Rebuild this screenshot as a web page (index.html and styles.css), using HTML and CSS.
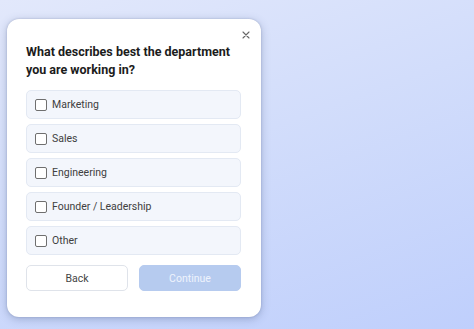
FILE: index.html
```html
<!DOCTYPE html>
<html>
<head>
<meta charset="utf-8">
<link rel="stylesheet" href="styles.css">
</head>
<body>
<div class="page">
  <div class="card">
    <button class="close" aria-label="Close">
      <svg width="8" height="8" viewBox="0 0 8 8"><path d="M1 1L7 7M7 1L1 7" stroke="#666" stroke-width="1.1" stroke-linecap="round"/></svg>
    </button>
    <h1 class="title">What describes best the department you are working in?</h1>
    <div class="options">
      <label class="option"><span class="box"></span><span class="label">Marketing</span></label>
      <label class="option"><span class="box"></span><span class="label">Sales</span></label>
      <label class="option"><span class="box"></span><span class="label">Engineering</span></label>
      <label class="option"><span class="box"></span><span class="label">Founder / Leadership</span></label>
      <label class="option"><span class="box"></span><span class="label">Other</span></label>
    </div>
    <div class="actions">
      <button class="btn back">Back</button>
      <button class="btn continue">Continue</button>
    </div>
  </div>
</div>
</body>
</html>
```
FILE: styles.css
```css
html, body {
  margin: 0;
  height: 100%;
}
body {
  background: linear-gradient(160deg, #e2e8fb 0%, #d2ddfb 45%, #bfcffc 100%);
  font-family: Roboto, "Liberation Sans", sans-serif;
  overflow: hidden;
}
.page {
  padding: 19px 0 0 7px;
}
.card {
  position: relative;
  box-sizing: border-box;
  width: 254px;
  background: #fff;
  border-radius: 12px;
  padding: 24px 20px 26px 19px;
  box-shadow: 0 2px 8px rgba(70, 85, 130, 0.35), 0 0 2px rgba(70, 85, 130, 0.3);
}
.close {
  position: absolute;
  top: 12px;
  right: 11px;
  width: 8px;
  height: 8px;
  padding: 0;
  border: 0;
  background: none;
  display: flex;
}
.title {
  margin: 0 0 11px;
  font-family: Roboto, sans-serif;
  font-weight: 700;
  font-size: 12.5px;
  line-height: 18px;
  color: #1c1c1c;
}
.options {
  display: flex;
  flex-direction: column;
  gap: 5px;
}
.option {
  box-sizing: border-box;
  height: 29px;
  display: flex;
  align-items: center;
  gap: 5px;
  padding-left: 8px;
  background: #f3f6fc;
  border: 1px solid #e3e9f3;
  border-radius: 5px;
}
.box {
  box-sizing: border-box;
  width: 12px;
  height: 12px;
  border: 1px solid #6f6f6f;
  border-radius: 2px;
  background: #fff;
}
.label {
  font-size: 10.5px;
  color: #404040;
}
.actions {
  display: grid;
  grid-template-columns: 1fr 1fr;
  gap: 11px;
  margin-top: 10px;
}
.btn {
  height: 26px;
  border-radius: 5px;
  font-family: Roboto, sans-serif;
  font-size: 10.5px;
  padding: 0;
}
.back {
  background: #fff;
  border: 1px solid #dfe3ea;
  color: #444;
}
.continue {
  background: #b6cbef;
  border: 1px solid #b6cbef;
  color: #eef3fd;
}
```
